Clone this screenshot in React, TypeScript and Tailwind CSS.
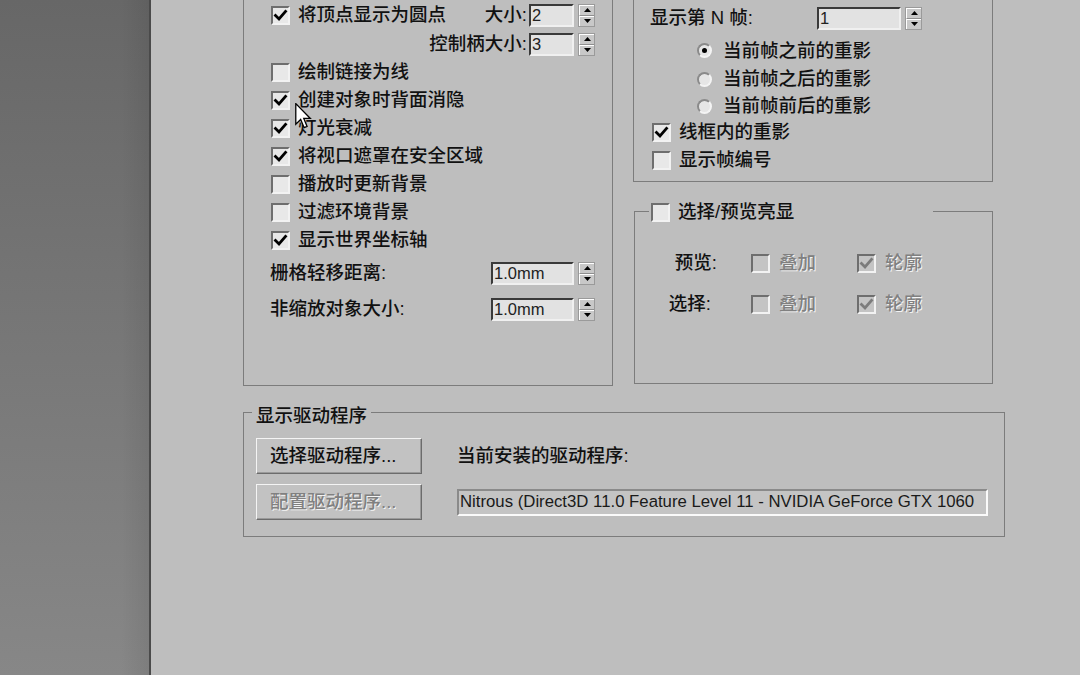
import React from "react";

const FONT = "font-['Liberation_Sans','Noto_Sans_CJK_SC',sans-serif]";

function Check({ checked, disabled }: { checked?: boolean; disabled?: boolean }) {
  return (
    <div
      className={`relative h-[19px] w-[19px] shrink-0 border-2 border-t-[#6e6e6e] border-l-[#6e6e6e] border-b-[#f2f2f2] border-r-[#f2f2f2] ${
        disabled ? "bg-[#c4c4c4]" : "bg-[#e8e8e8]"
      }`}
    >
      {checked && (
        <svg viewBox="0 0 15 15" className="absolute left-0 top-0 h-[15px] w-[15px]">
          <polyline
            points="2.5,7.5 6,11 12.5,3.5"
            fill="none"
            stroke={disabled ? "#7c7c7c" : "#000"}
            strokeWidth="2.8"
            strokeLinecap="square"
          />
        </svg>
      )}
    </div>
  );
}

function Radio({ on }: { on?: boolean }) {
  return (
    <div className="flex h-[15px] w-[15px] shrink-0 items-center justify-center rounded-full border-2 border-t-[#8a8a8a] border-l-[#8a8a8a] border-b-[#f4f4f4] border-r-[#f4f4f4] bg-[#e6e6e6]">
      {on && <div className="h-[5px] w-[5px] rounded-full bg-black" />}
    </div>
  );
}

function Spinner() {
  return (
    <div className="flex h-[23px] w-[17px] shrink-0 flex-col border border-[#9a9a9a] bg-[#c8c8c8]">
      <div className="flex flex-1 items-center justify-center border-b border-[#8e8e8e] border-t border-t-white border-l border-l-white">
        <svg viewBox="0 0 7 4" className="h-[4px] w-[7px]">
          <polygon points="3.5,0 7,4 0,4" fill="#000" />
        </svg>
      </div>
      <div className="flex flex-1 items-center justify-center border-t border-t-white border-l border-l-white">
        <svg viewBox="0 0 7 4" className="h-[4px] w-[7px]">
          <polygon points="0,0 7,0 3.5,4" fill="#000" />
        </svg>
      </div>
    </div>
  );
}

function Field({ value, w }: { value: string; w: string }) {
  return (
    <div
      className={`${w} flex h-[23px] items-center border-2 border-t-[#3a3a3a] border-l-[#3a3a3a] border-b-[#f0f0f0] border-r-[#f0f0f0] bg-[#e2e2e2] pl-[1px] text-[16.5px] leading-none text-[#222]`}
    >
      {value}
    </div>
  );
}

function CheckRow({ checked, label }: { checked?: boolean; label: string }) {
  return (
    <div className="flex h-[28px] items-center gap-[8px]">
      <Check checked={checked} />
      <span>{label}</span>
    </div>
  );
}

function Disabled({ children }: { children: React.ReactNode }) {
  return <span className="text-[#808080] [text-shadow:1px_1px_0_#f4f4f4]">{children}</span>;
}

function Pointer() {
  return (
    <svg
      viewBox="0 0 13 21"
      className="pointer-events-none absolute left-[144px] top-[103px] h-[27px] w-[17px]"
    >
      <path
        d="M0.5,0.5 L0.5,16.5 L4.3,12.8 L7,19.2 L9.3,18.2 L6.7,12 L11.8,12 Z"
        fill="#fff"
        stroke="#000"
        strokeWidth="1"
        strokeLinejoin="miter"
      />
    </svg>
  );
}

export default function App() {
  return (
    <div className={`flex h-[675px] w-[1080px] overflow-hidden ${FONT} text-[18.5px] font-medium text-[#111]`}>
      {/* workspace behind the dialog */}
      <div className="relative h-full w-[151px] shrink-0 border-r-2 border-[#4a4a4a] bg-[linear-gradient(180deg,#676767_0%,#777777_50%,#878787_100%)]">
        <div className="absolute inset-y-0 right-0 w-[28px] bg-[linear-gradient(90deg,rgba(0,0,0,0)_0%,rgba(0,0,0,0.07)_100%)]" />
      </div>

      {/* dialog body */}
      <div className="relative flex-1 bg-[#bebebe] pl-[92px]">
        <div className="mt-[-20px] flex gap-[20px]">
          {/* viewport options */}
          <div className="h-[406px] w-[370px] border border-[#7c7c7c] pl-[27px] pr-[17px] pt-[19px]">
            <div className="flex h-[30px] items-center">
              <div className="flex items-center gap-[8px]">
                <Check checked />
                <span>将顶点显示为圆点</span>
              </div>
              <div className="ml-auto flex items-center">
                <span>大小:</span>
                <div className="ml-[2px]">
                  <Field value="2" w="w-[45px]" />
                </div>
                <div className="ml-[4px]">
                  <Spinner />
                </div>
              </div>
            </div>
            <div className="flex h-[28px] items-center justify-end">
              <span>控制柄大小:</span>
              <div className="ml-[2px]">
                <Field value="3" w="w-[45px]" />
              </div>
              <div className="ml-[4px]">
                <Spinner />
              </div>
            </div>
            <CheckRow label="绘制链接为线" />
            <CheckRow checked label="创建对象时背面消隐" />
            <CheckRow checked label="灯光衰减" />
            <CheckRow checked label="将视口遮罩在安全区域" />
            <CheckRow label="播放时更新背景" />
            <CheckRow label="过滤环境背景" />
            <CheckRow checked label="显示世界坐标轴" />
            <div className="mt-[5px] flex h-[28px] items-center">
              <span className="-ml-[1px]">栅格轻移距离:</span>
              <div className="ml-auto">
                <Field value="1.0mm" w="w-[83px]" />
              </div>
              <div className="ml-[4px]">
                <Spinner />
              </div>
            </div>
            <div className="mt-[8px] flex h-[28px] items-center">
              <span className="-ml-[1px]">非缩放对象大小:</span>
              <div className="ml-auto">
                <Field value="1.0mm" w="w-[83px]" />
              </div>
              <div className="ml-[4px]">
                <Spinner />
              </div>
            </div>
          </div>

          {/* ghosting + highlight */}
          <div className="flex w-[360px] flex-col">
            <div className="h-[202px] border border-[#7c7c7c] pl-[16px] pt-[19px]">
              <div className="flex h-[36px] items-center">
                <span className="w-[167px]">显示第 N 帧:</span>
                <Field value="1" w="w-[84px]" />
                <div className="ml-[4px]">
                  <Spinner />
                </div>
              </div>
              <div className="flex h-[29px] items-center gap-[11px] pl-[47px]">
                <Radio on />
                <span>当前帧之前的重影</span>
              </div>
              <div className="flex h-[28px] items-center gap-[11px] pl-[47px]">
                <Radio />
                <span>当前帧之后的重影</span>
              </div>
              <div className="flex h-[26px] items-center gap-[11px] pl-[47px]">
                <Radio />
                <span>当前帧前后的重影</span>
              </div>
              <div className="flex h-[26px] items-center gap-[8px] pl-[2px]">
                <Check checked />
                <span>线框内的重影</span>
              </div>
              <div className="flex h-[30px] items-center gap-[8px] pl-[2px]">
                <Check />
                <span>显示帧编号</span>
              </div>
            </div>

            <div className="relative ml-px mt-[29px] h-[173px] border border-[#7c7c7c]">
              <div className="absolute left-[14px] top-[-10px] flex h-[20px] w-[284px] items-center gap-[8px] bg-[#bebebe] pl-[2px]">
                <Check />
                <span>选择/预览亮显</span>
              </div>
              <div className="mt-[36px] flex h-[30px] items-center">
                <span className="w-[82px] text-right">预览:</span>
                <div className="ml-[34px] flex w-[106px] items-center gap-[9px]">
                  <Check disabled />
                  <Disabled>叠加</Disabled>
                </div>
                <div className="flex items-center gap-[9px]">
                  <Check checked disabled />
                  <Disabled>轮廓</Disabled>
                </div>
              </div>
              <div className="mt-[11px] flex h-[30px] items-center">
                <span className="w-[76px] text-right">选择:</span>
                <div className="ml-[40px] flex w-[106px] items-center gap-[9px]">
                  <Check disabled />
                  <Disabled>叠加</Disabled>
                </div>
                <div className="flex items-center gap-[9px]">
                  <Check checked disabled />
                  <Disabled>轮廓</Disabled>
                </div>
              </div>
            </div>
          </div>
        </div>

        {/* display driver */}
        <div className="relative mt-[26px] h-[125px] w-[762px] border border-[#7c7c7c] pl-[12px] pt-[25px]">
          <div className="absolute left-[8px] top-[-8px] bg-[#bebebe] px-[4px] leading-[22px]">显示驱动程序</div>
          <div className="grid grid-cols-[166px_531px] grid-rows-[36px_36px] gap-x-[35px] gap-y-[10px]">
            <div className="flex items-center border border-t-[#f4f4f4] border-l-[#f4f4f4] border-b-[#6c6c6c] border-r-[#6c6c6c] bg-[#c2c2c2] pl-[13px] shadow-[inset_-1px_-1px_0_#9a9a9a]">
              选择驱动程序...
            </div>
            <div className="flex items-center">当前安装的驱动程序:</div>
            <div className="flex items-center border border-t-[#f4f4f4] border-l-[#f4f4f4] border-b-[#6c6c6c] border-r-[#6c6c6c] bg-[#c2c2c2] pl-[13px] shadow-[inset_-1px_-1px_0_#9a9a9a]">
              <Disabled>配置驱动程序...</Disabled>
            </div>
            <div className="flex items-center">
              <div className="flex h-[27px] w-full items-center whitespace-nowrap border-2 border-t-[#8a8a8a] border-l-[#8a8a8a] border-b-[#fafafa] border-r-[#fafafa] bg-[#c4c4c4] pl-[1px] text-[16.75px] leading-none text-[#1a1a1a]">
                Nitrous (Direct3D 11.0 Feature Level 11 - NVIDIA GeForce GTX 1060
              </div>
            </div>
          </div>
        </div>

        <Pointer />
      </div>
    </div>
  );
}
